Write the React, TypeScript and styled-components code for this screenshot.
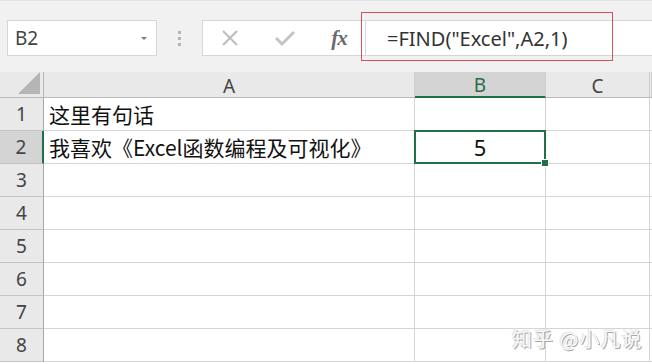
import React from 'react'
import styled, { createGlobalStyle } from 'styled-components'

const Global = createGlobalStyle`
  html, body { margin: 0; padding: 0; background: #ffffff; }
  body { width: 652px; height: 364px; overflow: hidden; font-family: "Noto Sans CJK SC", "Noto Sans", sans-serif; }
`

const Page = styled.div`
  position: relative;
  width: 652px;
  height: 364px;
  overflow: hidden;
  background: #ffffff;
`

const Toolbar = styled.div`
  display: flex;
  align-items: center;
  height: 72px;
  box-sizing: border-box;
  padding: 19px 0 16px 7px;
  background: #f1f1f1;
  border-top: 1px solid #e2e2e2;
`

const NameBox = styled.div`
  display: flex;
  align-items: center;
  justify-content: space-between;
  width: 150px;
  height: 36px;
  box-sizing: border-box;
  padding: 0 9px 0 7px;
  background: #ffffff;
  border: 1px solid #d6d6d6;
  font-family: "Noto Sans", "Open Sans", sans-serif;
  font-size: 19px;
  color: #444;
`

const Caret = styled.span`
  width: 0;
  height: 0;
  border-left: 3px solid transparent;
  border-right: 3px solid transparent;
  border-top: 3px solid #7a7a7a;
`

const Grip = styled.div`
  display: flex;
  flex-direction: column;
  gap: 3px;
  margin: 0 21px 0 21px;
  i {
    display: block;
    width: 3px;
    height: 3px;
    background: #b4b4b4;
  }
`

const FormulaBox = styled.div`
  display: flex;
  align-items: center;
  flex: 1;
  height: 36px;
  box-sizing: border-box;
  background: #ffffff;
  border: 1px solid #d6d6d6;
  border-right: none;
`

const Tool = styled.div<{ w: number }>`
  display: flex;
  align-items: center;
  justify-content: center;
  width: ${({ w }) => w}px;
  height: 100%;
`

const Fx = styled.span`
  font-family: "Liberation Serif", serif;
  font-style: italic;
  font-weight: bold;
  font-size: 21px;
  color: #6a6a6a;
  letter-spacing: -1px;
`

const Formula = styled.div`
  flex: 1;
  height: 100%;
  display: flex;
  align-items: center;
  padding-left: 21px;
  border-left: 1px solid #d6d6d6;
  font-family: "Noto Sans", "Open Sans", sans-serif;
  font-size: 20px;
  color: #333;
`

const Highlight = styled.div`
  position: absolute;
  left: 361px;
  top: 12px;
  width: 252px;
  height: 49px;
  box-sizing: border-box;
  border: 1px solid #d0525e;
`

const Sheet = styled.div`
  display: grid;
  grid-template-columns: 44px 371px 131px 104px 2px;
  grid-template-rows: 26px repeat(8, 33px);
`

const Corner = styled.div`
  background: #e9e9e9;
  border-right: 1px solid #b8b8b8;
  border-bottom: 1px solid #b8b8b8;
  box-sizing: border-box;
  display: flex;
  align-items: flex-end;
  justify-content: flex-end;
  padding: 0 3px 3px 0;
  svg { display: block; }
`

const ColHead = styled.div<{ active?: boolean }>`
  display: flex;
  align-items: center;
  justify-content: center;
  box-sizing: border-box;
  background: ${({ active }) => (active ? '#d4d4d4' : '#e9e9e9')};
  border-right: 1px solid #cfcfcf;
  border-bottom: ${({ active }) => (active ? '2px solid #21704a' : '1px solid #b8b8b8')};
  font-family: "Noto Sans", "Open Sans", sans-serif;
  font-size: 19px;
  color: ${({ active }) => (active ? '#2b6b47' : '#444')};
  padding-top: 2px;
`

const RowHead = styled.div<{ active?: boolean }>`
  display: flex;
  align-items: center;
  justify-content: center;
  box-sizing: border-box;
  background: ${({ active }) => (active ? '#d4d4d4' : '#e9e9e9')};
  border-right: ${({ active }) => (active ? '2px solid #21704a' : '1px solid #a8a8a8')};
  border-bottom: 1px solid #c4c4c4;
  font-family: "Noto Sans", "Open Sans", sans-serif;
  font-size: 19px;
  color: #444;
`

const Cell = styled.div<{ center?: boolean }>`
  display: flex;
  align-items: center;
  justify-content: ${({ center }) => (center ? 'center' : 'flex-start')};
  box-sizing: border-box;
  padding-left: 5px;
  border-right: 1px solid #d4d4d4;
  border-bottom: 1px solid #d4d4d4;
  font-family: "Noto Sans CJK SC", "Noto Sans", sans-serif;
  font-size: 21px;
  color: #111;
  white-space: nowrap;
  overflow: visible;
`

const SelectedCell = styled(Cell)`
  position: relative;
  border: 2px solid #21704a;
  margin: -1px 0 0 -1px;
  width: calc(100% + 1px);
  height: calc(100% + 1px);
  padding-left: 0;
  font-family: "Noto Sans", "Open Sans", sans-serif;
  font-size: 22px;
`

const Handle = styled.span`
  position: absolute;
  right: -5px;
  bottom: -5px;
  width: 6px;
  height: 6px;
  background: #21704a;
  border: 1px solid #ffffff;
`

const Watermark = styled.div`
  position: absolute;
  left: 512px;
  top: 324px;
  font-family: "Noto Sans CJK SC", sans-serif;
  font-size: 20px;
  color: #f8f8f8;
  text-shadow: 1px 1px 0 #a8a8a8, -1px -1px 0 #e4e4e4;
  letter-spacing: 1px;
`

const cols = ['A', 'B', 'C', '']
const data: Record<number, string> = {
  1: '这里有句话',
  2: '我喜欢《Excel函数编程及可视化》',
}

export default function App() {
  return (
    <Page>
      <Global />
      <Toolbar>
        <NameBox>
          <span>B2</span>
          <Caret />
        </NameBox>
        <Grip>
          <i /><i /><i />
        </Grip>
        <FormulaBox>
          <Tool w={54}>
            <svg width="18" height="18" viewBox="0 0 18 18">
              <path d="M2 2 L16 16 M16 2 L2 16" stroke="#bdbdbd" strokeWidth="2" fill="none" />
            </svg>
          </Tool>
          <Tool w={56}>
            <svg width="22" height="18" viewBox="0 0 22 18">
              <path d="M2 9 L8 15 L20 3" stroke="#c4c4c4" strokeWidth="3" fill="none" />
            </svg>
          </Tool>
          <Tool w={52}>
            <Fx>fx</Fx>
          </Tool>
          <Formula>=FIND("Excel",A2,1)</Formula>
        </FormulaBox>
      </Toolbar>
      <Highlight />
      <Sheet>
        <Corner>
          <svg width="22" height="22" viewBox="0 0 22 22">
            <path d="M22 0 L22 22 L0 22 Z" fill="#b5b5b5" />
          </svg>
        </Corner>
        {cols.map((c, i) => (
          <ColHead key={i} active={c === 'B'}>{c}</ColHead>
        ))}
        {[1, 2, 3, 4, 5, 6, 7, 8].map((r) => (
          <React.Fragment key={r}>
            <RowHead active={r === 2}>{r}</RowHead>
            <Cell>{data[r] || ''}</Cell>
            {r === 2 ? (
              <SelectedCell center>
                5
                <Handle />
              </SelectedCell>
            ) : (
              <Cell />
            )}
            <Cell />
            <Cell />
          </React.Fragment>
        ))}
      </Sheet>
      <Watermark>知乎 @小凡说</Watermark>
    </Page>
  )
}
